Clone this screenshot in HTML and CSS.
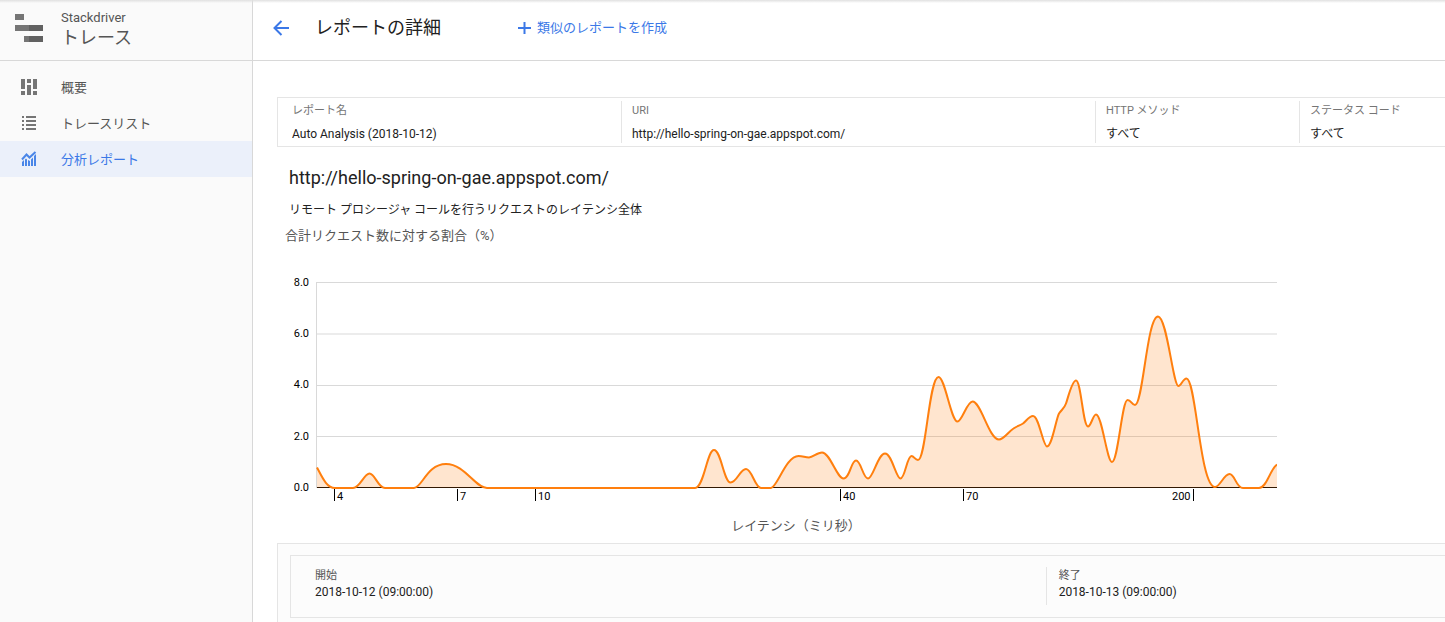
FILE: index.html
```
<!DOCTYPE html>
<html lang="ja">
<head>
  <meta charset="UTF-8">
  <meta name="viewport" content="width=device-width, initial-scale=1.0">
  <title>レポートの詳細</title>
  <link rel="stylesheet" href="styles.css">
</head>
<body>

  <aside class="sidebar">
    <div class="product">
      <svg class="product-icon" width="28" height="28" viewBox="0 0 28 28" shape-rendering="crispEdges">
        <path fill="#757575" d="M0 0h9v6H0zM0 11h14v6H0zM9 22h5v6H9z"/>
        <path fill="#616161" d="M14 11h14v6H14zM14 22h14v6H14z"/>
      </svg>
      <div>
        <div class="product-brand">Stackdriver</div>
        <div class="product-name">トレース</div>
      </div>
    </div>
    <nav class="menu">
      <a href="#">
        <svg width="16" height="16" viewBox="0 0 16 16" fill="currentColor" shape-rendering="crispEdges">
          <path d="M0 0h4v10H0zM0 12h4v4H0zM6 0h4v4H6zM6 6h4v10H6zM12 0h4v10h-4zM12 12h4v4h-4z"/>
        </svg>
        <span>概要</span>
      </a>
      <a href="#">
        <svg width="16" height="16" viewBox="0 0 16 16" fill="currentColor" shape-rendering="crispEdges">
          <path d="M1 1h2v2H1zM1 5h2v2H1zM1 9h2v2H1zM1 13h2v2H1zM5 1h10v2H5zM5 5h10v2H5zM5 9h10v2H5zM5 13h10v2H5z"/>
        </svg>
        <span>トレースリスト</span>
      </a>
      <a href="#" class="active">
        <svg width="16" height="16" viewBox="0 0 16 16" fill="currentColor">
          <path d="M1 11l2-2v6H1zM4 8.5l1-1 1 1V15H4zM7 9l2 1v5H7zM10 8.5l2-2V15h-2zM13 5l2-2v12h-2z"/>
          <path d="M1 8.5L5.5 3.500L8.500 6.500L14.500 1" fill="none" stroke="currentColor" stroke-width="2"/>
        </svg>
        <span>分析レポート</span>
      </a>
    </nav>
  </aside>

  <main class="main">
    <header class="toolbar">
      <a href="#" class="back" aria-label="戻る">
        <svg width="16" height="16" viewBox="0 0 16 16" fill="none" stroke="currentColor" stroke-width="2">
          <path d="M16 8H2M8.500 1L1.500 8l7 7"/>
        </svg>
      </a>
      <h1>レポートの詳細</h1>
      <button type="button" class="create">
        <svg width="13" height="12" viewBox="0 0 13 12" fill="currentColor">
          <path d="M5.500 0h2v5H13v2H7.500v5h-2V7H0V5h5.500z"/>
        </svg>
        類似のレポートを作成
      </button>
    </header>

    <div class="content">
      <dl class="summary">
        <div><dt>レポート名</dt><dd>Auto Analysis (2018-10-12)</dd></div>
        <div><dt>URI</dt><dd>http://hello-spring-on-gae.appspot.com/</dd></div>
        <div><dt>HTTP メソッド</dt><dd>すべて</dd></div>
        <div><dt>ステータス コード</dt><dd>すべて</dd></div>
      </dl>

      <section class="report">
        <h2>http://hello-spring-on-gae.appspot.com/</h2>
        <p class="description">リモート プロシージャ コールを行うリクエストのレイテンシ全体</p>
        <figure class="chart">
          <div class="y-title">合計リクエスト数に対する割合（%）</div>
          <svg width="1000" height="240" viewBox="0 0 1000 240">
            <g transform="translate(40 12)">
              <g class="grid">
                <path d="M0 .5H960M0 52H960M0 103.500H960M0 154.500H960M-.5 0V206"/>
              </g>
              <path class="axis" d="M0 205.500H960"/>
              <path class="area" d="M0 185.500C6 197 10 206 18 206H36C43 206 47 191.500 52.500 191.500S61 206 68 206H97C105 206 110 182 129 182S158 206 170 206H378C387 206 390 168 397 168S407 200.500 413.500 200.500S423 187 429 187S438 206 444 206H454C460 206 469 174 481.500 174C486 174 488 175.500 492 175.500S500 170.500 505 170.500C513 170.500 520 196.500 526.500 196.500S534 178.500 539 178.500S546 196.500 551 196.500S561 171.500 568 171.500S579 196.500 583.500 196.500S590 174 594.500 174C597 174 598 178 601 178C609 178 612 95 621.500 95C628 95 634 139.500 640.500 139.500C645 139.500 650 119.500 655.500 119.500C664 119.500 672 157.500 682 157.500C687 157.500 691 150 696.500 146.500C700 144 703 143.500 706 141.500S712 134 716 134C722 134 726 164.500 730 164.500C735 164.500 739 137 742 131.500C745 127 747 127 749 121.500S755 98.500 759 98.500C764 98.500 766 144.500 771 144.500C774 144.500 776 132.500 779 132.500C785 132.500 790 180 795 180C801 180 805 118 810.500 118C814 118 815 123 818 123C826 123 830 34.500 841 34.500C850 34.500 856 104 861.500 104C864 104 866 96.500 869.500 96.500C879 96.500 883 205 898 205C903 205 907 192 912.500 192S919 206 926 206H942C950 206 953 187 960 182.500V206H0z"/>
              <path class="line" d="M0 185.500C6 197 10 206 18 206H36C43 206 47 191.500 52.500 191.500S61 206 68 206H97C105 206 110 182 129 182S158 206 170 206H378C387 206 390 168 397 168S407 200.500 413.500 200.500S423 187 429 187S438 206 444 206H454C460 206 469 174 481.500 174C486 174 488 175.500 492 175.500S500 170.500 505 170.500C513 170.500 520 196.500 526.500 196.500S534 178.500 539 178.500S546 196.500 551 196.500S561 171.500 568 171.500S579 196.500 583.500 196.500S590 174 594.500 174C597 174 598 178 601 178C609 178 612 95 621.500 95C628 95 634 139.500 640.500 139.500C645 139.500 650 119.500 655.500 119.500C664 119.500 672 157.500 682 157.500C687 157.500 691 150 696.500 146.500C700 144 703 143.500 706 141.500S712 134 716 134C722 134 726 164.500 730 164.500C735 164.500 739 137 742 131.500C745 127 747 127 749 121.500S755 98.500 759 98.500C764 98.500 766 144.500 771 144.500C774 144.500 776 132.500 779 132.500C785 132.500 790 180 795 180C801 180 805 118 810.500 118C814 118 815 123 818 123C826 123 830 34.500 841 34.500C850 34.500 856 104 861.500 104C864 104 866 96.500 869.500 96.500C879 96.500 883 205 898 205C903 205 907 192 912.500 192S919 206 926 206H942C950 206 953 187 960 182.500"/>
              <path class="axis" d="M17.500 207v12M140.500 207v12M218.500 207v12M523.500 207v12M646.500 207v12M876.500 207v12"/>
              <g class="y-labels">
                <text x="-8" y="4">8.0</text>
                <text x="-8" y="55">6.0</text>
                <text x="-8" y="106">4.0</text>
                <text x="-8" y="158">2.0</text>
                <text x="-8" y="209">0.0</text>
              </g>
              <g class="x-labels">
                <text x="20" y="218">4</text>
                <text x="143" y="218">7</text>
                <text x="221" y="218">10</text>
                <text x="526" y="218">40</text>
                <text x="649" y="218">70</text>
                <text x="855" y="218">200</text>
              </g>
            </g>
          </svg>
          <figcaption>レイテンシ（ミリ秒）</figcaption>
        </figure>
      </section>

      <section class="period">
        <dl>
          <div><dt>開始</dt><dd>2018-10-12 (09:00:00)</dd></div>
          <div><dt>終了</dt><dd>2018-10-13 (09:00:00)</dd></div>
        </dl>
      </section>
    </div>
  </main>

</body>
</html>
```
FILE: styles.css
```
* {
  box-sizing: border-box;
}

body {
  display: flex;
  min-height: 100vh;
  margin: 0;
  background: #fff;
  color: #212121;
  font-family: Roboto, "Noto Sans CJK JP", sans-serif;
  font-size: 12px;
  line-height: 16px;
}

/* shadow of the bar above the page */
body::before {
  content: "";
  position: absolute;
  top: 0;
  left: 0;
  right: 0;
  height: 3px;
  background: linear-gradient(#e0e0e0, rgba(224, 224, 224, 0));
}

h1, h2, p, dl, dd, figure {
  margin: 0;
  font-weight: 400;
}

a {
  text-decoration: none;
}

svg {
  display: block;
  flex: none;
}

.sidebar {
  flex: none;
  width: 253px;
  background: #fafafa;
  border-right: 1px solid #d8d8d8;
}

.product {
  display: flex;
  align-items: flex-start;
  gap: 18px;
  height: 61px;
  padding: 10px 15px;
  border-bottom: 1px solid #d8d8d8;
  color: #555;
}

.product-icon {
  margin-top: 4px;
}

.product-brand {
  font-size: 13px;
}

.product-name {
  font-size: 18px;
  line-height: 24px;
}

.menu {
  padding-top: 8px;
}

.menu a {
  display: flex;
  align-items: center;
  gap: 24px;
  height: 36px;
  padding-left: 21px;
  color: #555;
  font-size: 13px;
}

.menu span {
  padding-top: 2px;
}

.menu svg {
  color: #757575;
}

.menu .active {
  background: #ebf0fa;
  color: #3b78e7;
}

.menu .active svg {
  color: #4a86e8;
}

.main {
  display: flex;
  flex: 1;
  flex-direction: column;
  min-width: 0;
}

.toolbar {
  display: flex;
  align-items: center;
  height: 61px;
  padding: 0 20px 4px;
  border-bottom: 1px solid #d8d8d8;
}

.back {
  color: #3b78e7;
}

.toolbar h1 {
  margin-left: 26px;
  font-size: 18px;
  line-height: 24px;
}

.create {
  display: flex;
  align-items: center;
  gap: 6px;
  margin-left: 77px;
  padding: 0;
  background: none;
  border: none;
  color: #3b78e7;
  font-family: inherit;
  font-size: 13px;
  line-height: 16px;
  cursor: pointer;
}

.content {
  display: flex;
  flex: 1;
  flex-direction: column;
  padding: 36px 0 0 24px;
}

.summary {
  display: grid;
  grid-template-columns: 343fr 474fr 204fr 146fr;
  padding: 3px 0;
  border: 1px solid #e5e5e5;
  border-right: none;
}

.summary div {
  height: 42px;
  padding: 2px 0 0 10px;
  border-left: 1px solid #e5e5e5;
}

.summary div:first-child {
  padding-left: 14px;
  border-left: none;
}

.summary dt {
  margin-bottom: 7px;
  color: #757575;
  font-size: 11px;
}

.report h2 {
  margin: 19px 0 0 12px;
  font-size: 18px;
  line-height: 24px;
}

.description {
  margin: 12px 0 0 12px;
}

.y-title {
  margin: 10px 0 26px 8px;
  color: #555;
  font-size: 13px;
}

.chart svg {
  font-size: 11px;
}

.chart figcaption {
  width: 1038px;
  margin: 8px 0 9px;
  color: #555;
  font-size: 13px;
  text-align: center;
}

.grid {
  fill: none;
  stroke: #d9d9d9;
}

.axis {
  stroke: #000;
}

.area {
  fill: #ff7f0e;
  fill-opacity: .2;
}

.line {
  fill: none;
  stroke: #ff7f0e;
  stroke-width: 2;
}

.y-labels {
  text-anchor: end;
}

.period {
  flex: 1;
  padding: 11px 0 4px 12px;
  background: #fcfcfc;
  border: 1px solid #e5e5e5;
  border-right: none;
  border-bottom: none;
}

.period dl {
  display: grid;
  grid-template-columns: 754fr 399fr;
  padding: 11px 0 12px;
  border: 1px solid #e5e5e5;
  border-right: none;
}

.period dl div {
  height: 38px;
  padding: 1px 0 0 12px;
  border-left: 1px solid #e5e5e5;
}

.period dl div:first-child {
  padding-left: 24px;
  border-left: none;
}

.period dt {
  color: #555;
  font-size: 11px;
}
```
